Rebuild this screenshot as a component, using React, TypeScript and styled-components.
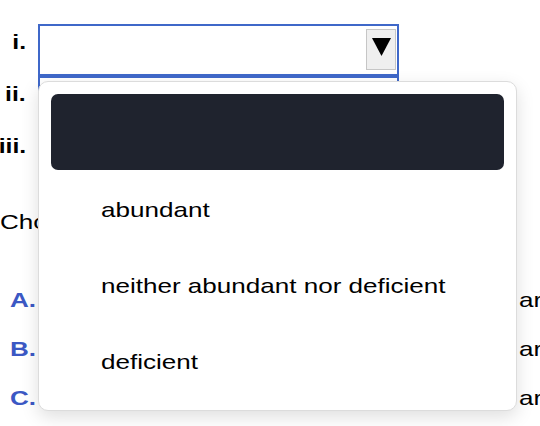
import React from "react";
import styled, { createGlobalStyle } from "styled-components";

const Global = createGlobalStyle`
  html, body { margin: 0; padding: 0; background: #fff; }
  body {
    font-family: "Liberation Sans", Arial, sans-serif;
    color: #000;
    overflow: hidden;
    width: 540px;
    height: 426px;
  }
`;

const Page = styled.div`
  position: relative;
  width: 540px;
  height: 426px;
  overflow: hidden;
`;

/* The reference renders its text noticeably wider than it is tall */
const Wide = styled.span<{ $origin?: "left" | "right" }>`
  display: inline-block;
  white-space: nowrap;
  transform: scaleX(1.24);
  transform-origin: ${(p) => p.$origin ?? "left"} center;
`;

const Blanks = styled.div`
  display: grid;
  grid-template-columns: 26px 361px;
  column-gap: 12px;
  padding-top: 24px;
`;

const BlankLabel = styled.div`
  font-size: 20px;
  font-weight: 700;
  line-height: 24px;
  padding-top: 6px;
  text-align: right;
`;

const Select = styled.div`
  box-sizing: border-box;
  height: 52px;
  border: 2px solid #3f68c9;
  display: flex;
  justify-content: flex-end;
  align-items: flex-start;
  padding: 3px 1px 0 0;
  background: #fff;
`;

const ArrowButton = styled.div`
  box-sizing: border-box;
  width: 30px;
  height: 41px;
  padding-bottom: 5px;
  background: #efefef;
  border: 1px solid #c6c6c6;
  display: flex;
  align-items: center;
  justify-content: center;
`;

const Prompt = styled.p`
  margin: 30px 0 0 0;
  font-size: 21px;
  line-height: 24px;
  white-space: nowrap;
`;

const Choices = styled.div`
  margin-top: 54px;
  display: flex;
  flex-direction: column;
  gap: 25px;
`;

const Choice = styled.div`
  display: grid;
  grid-template-columns: 40px minmax(0, 1fr);
  padding-left: 10px;
  font-size: 21px;
  line-height: 24px;
  white-space: nowrap;
`;

const ChoiceLetter = styled.span`
  font-weight: 700;
  color: #3b58c4;
`;

const ChoiceText = styled.span`
  overflow: hidden;
`;

const Menu = styled.div`
  position: absolute;
  left: 38px;
  top: 81px;
  width: 479px;
  box-sizing: border-box;
  padding: 12px;
  background: #fff;
  border: 1px solid #dcdcdc;
  border-radius: 10px;
  box-shadow: 0 6px 18px rgba(0, 0, 0, 0.13);
  display: flex;
  flex-direction: column;
`;

const MenuItem = styled.div<{ $active?: boolean }>`
  box-sizing: border-box;
  height: 76px;
  border-radius: 7px;
  background: ${(p) => (p.$active ? "#1f232e" : "transparent")};
  color: ${(p) => (p.$active ? "#fff" : "#000")};
  display: flex;
  align-items: center;
  padding: 4px 0 0 50px;
  font-size: 21px;
`;

const Triangle = () => (
  <svg width="19" height="18" viewBox="0 0 19 18">
    <polygon points="0,0 19,0 9.5,18" fill="#000" />
  </svg>
);

const choices = [
  { letter: "A.", text: "i. abundant, ii. abundant, iii. deficient, all are wrong" },
  { letter: "B.", text: "i. abundant, ii. deficient, iii. abundant, all are wrong" },
  { letter: "C.", text: "i. deficient, ii. abundant, iii. abundant, all are wrong" },
];

export default function App() {
  const labels = ["i.", "ii.", "iii."];
  return (
    <Page>
      <Global />
      <Blanks>
        {labels.map((l) => (
          <React.Fragment key={l}>
            <BlankLabel>
              <Wide $origin="right">{l}</Wide>
            </BlankLabel>
            <Select>
              <ArrowButton>
                <Triangle />
              </ArrowButton>
            </Select>
          </React.Fragment>
        ))}
      </Blanks>
      <Prompt>
        <Wide>Choose the correct option.</Wide>
      </Prompt>
      <Choices>
        {choices.map((c) => (
          <Choice key={c.letter}>
            <ChoiceLetter>
              <Wide>{c.letter}</Wide>
            </ChoiceLetter>
            <ChoiceText>
              <Wide>{c.text}</Wide>
            </ChoiceText>
          </Choice>
        ))}
      </Choices>
      <Menu>
        <MenuItem $active />
        <MenuItem>
          <Wide>abundant</Wide>
        </MenuItem>
        <MenuItem>
          <Wide>neither abundant nor deficient</Wide>
        </MenuItem>
        <MenuItem>
          <Wide>deficient</Wide>
        </MenuItem>
      </Menu>
    </Page>
  );
}
